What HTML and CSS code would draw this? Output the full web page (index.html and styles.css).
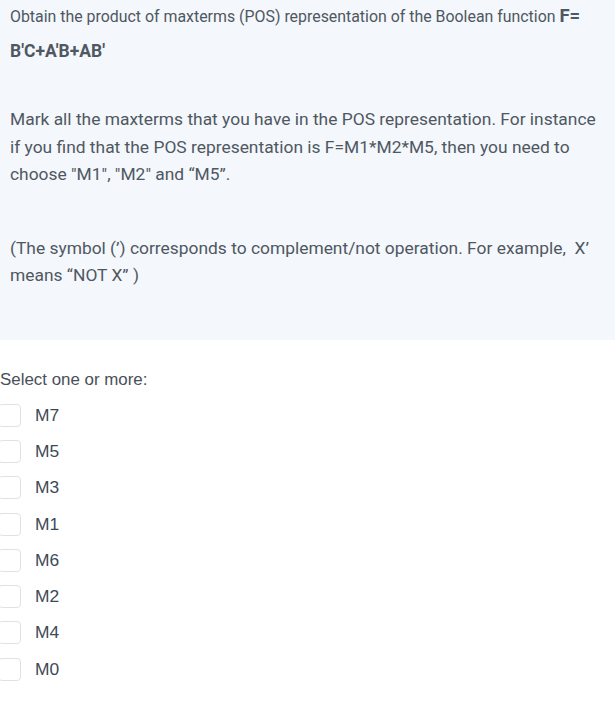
FILE: index.html
```html
<!DOCTYPE html>
<html lang="en">
<head>
  <meta charset="UTF-8">
  <title>Question</title>
  <link rel="stylesheet" href="styles.css">
</head>
<body>
  <div class="qtext">
    <p class="lead">Obtain the product of maxterms (POS) representation of the Boolean function <strong class="big">F=</strong><br><strong class="func">B'C+A'B+AB'</strong></p>
    <p class="para">Mark all the maxterms that you have in the POS representation. For instance if you find that the POS representation is F=M1*M2*M5, then you need to choose "M1", "M2" and “M5”.</p>
    <p class="para">(The symbol (’) corresponds to complement/not operation. For example,&nbsp; X’ means “NOT X” )</p>
  </div>

  <div class="answer">
    <div class="prompt">Select one or more:</div>
    <label class="option"><span class="box"></span>M7</label>
    <label class="option"><span class="box"></span>M5</label>
    <label class="option"><span class="box"></span>M3</label>
    <label class="option"><span class="box"></span>M1</label>
    <label class="option"><span class="box"></span>M6</label>
    <label class="option"><span class="box"></span>M2</label>
    <label class="option"><span class="box"></span>M4</label>
    <label class="option"><span class="box"></span>M0</label>
  </div>
</body>
</html>
```

FILE: styles.css
```css
body {
  margin: 0;
  font-family: Roboto, 'Liberation Sans', sans-serif;
  color: #4f5862;
  background: #fff;
}

.qtext {
  background: #f4f7fb;
  padding: 0 10px;
  height: 340px;
  box-sizing: border-box;
  overflow: hidden;
}

.qtext p {
  margin: 0;
}

.lead {
  font-size: 15.9px;
  line-height: 34px;
  margin-top: -1px !important;
}

.lead .big {
  font-size: 18.5px;
}

.lead .func {
  font-size: 17.5px;
}

.para {
  font-size: 17.4px;
  line-height: 27.5px;
  margin-top: 37px !important;
}

.para + .para {
  margin-top: 46px !important;
}

.answer {
  font-family: 'Liberation Sans', Arial, sans-serif;
  color: #495057;
  padding-top: 29px;
}

.prompt {
  font-size: 16.9px;
  line-height: 22px;
  margin-bottom: 6px;
}

.option {
  display: flex;
  align-items: center;
  height: 36.3px;
  font-size: 17.4px;
  color: #3d4a56;
}

.box {
  width: 23px;
  height: 23px;
  margin-left: -2px;
  margin-right: 14px;
  border: 1px solid #dee2e6;
  border-radius: 4px;
  background: #fff;
  box-sizing: border-box;
  flex: none;
}
```
